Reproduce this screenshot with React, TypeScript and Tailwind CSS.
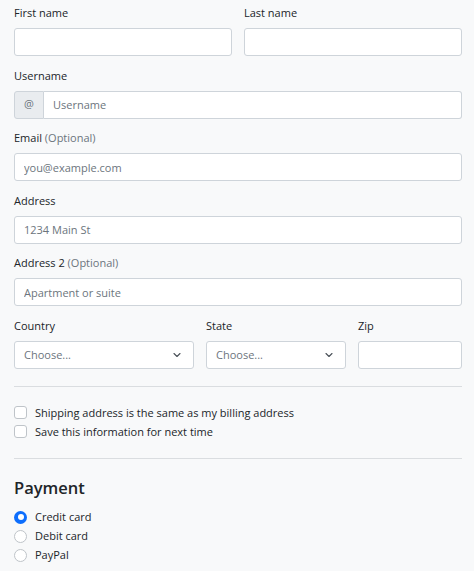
import { ChevronDown } from "lucide-react";

function Label({ text, optional }: { text: string; optional?: boolean }) {
  return (
    <label className="mb-[6px] block leading-[18px]">
      {text}
      {optional && <span className="text-[#6c757d]"> (Optional)</span>}
    </label>
  );
}

function TextInput({ placeholder = "" }: { placeholder?: string }) {
  return (
    <input
      placeholder={placeholder}
      className="block h-[28px] w-full rounded-[3px] border border-[#ced4da] bg-white px-[9px] text-[11px] text-[#212529] outline-none placeholder:text-[#6c757d]"
    />
  );
}

function Select() {
  return (
    <div className="flex h-[28px] w-full items-center justify-between rounded-[3px] border border-[#ced4da] bg-white pr-[10px] pl-[9px] text-[#6c757d]">
      <span>Choose...</span>
      <ChevronDown size={12} strokeWidth={2.2} className="text-[#495057]" />
    </div>
  );
}

function Check({ text }: { text: string }) {
  return (
    <div className="flex h-[19px] items-center gap-[8px]">
      <span className="h-[13px] w-[13px] rounded-[3px] border border-[#bfc4c9] bg-white" />
      <span>{text}</span>
    </div>
  );
}

function Radio({ text, checked }: { text: string; checked?: boolean }) {
  return (
    <div className="flex h-[19px] items-center gap-[8px]">
      {checked ? (
        <span className="flex h-[13px] w-[13px] items-center justify-center rounded-full bg-[#0d6efd]">
          <span className="h-[6px] w-[6px] rounded-full bg-white" />
        </span>
      ) : (
        <span className="h-[13px] w-[13px] rounded-full border border-[#bfc4c9] bg-white" />
      )}
      <span>{text}</span>
    </div>
  );
}

export default function App() {
  return (
    <div className="min-h-screen bg-[#f8f9fa] px-[14px] pt-[4px] font-['Open_Sans',sans-serif] text-[11px] text-[#212529]">
      <form className="w-[448px]">
        <div className="mb-[10.6px] grid grid-cols-2 gap-x-[12px]">
          <div>
            <Label text="First name" />
            <TextInput />
          </div>
          <div>
            <Label text="Last name" />
            <TextInput />
          </div>
        </div>

        <div className="mb-[10.6px]">
          <Label text="Username" />
          <div className="flex h-[28px]">
            <span className="flex w-[30px] items-center justify-center rounded-l-[3px] border border-[#ced4da] bg-[#e9ecef] text-[#6c757d]">
              @
            </span>
            <input
              placeholder="Username"
              className="block h-full min-w-0 flex-1 rounded-r-[3px] border border-l-0 border-[#ced4da] bg-white px-[9px] text-[11px] outline-none placeholder:text-[#6c757d]"
            />
          </div>
        </div>

        <div className="mb-[10.6px]">
          <Label text="Email" optional />
          <TextInput placeholder="you@example.com" />
        </div>

        <div className="mb-[10.6px]">
          <Label text="Address" />
          <TextInput placeholder="1234 Main St" />
        </div>

        <div className="mb-[10.6px]">
          <Label text="Address 2" optional />
          <TextInput placeholder="Apartment or suite" />
        </div>

        <div className="grid grid-cols-[180px_140px_104px] gap-x-[12px]">
          <div>
            <Label text="Country" />
            <Select />
          </div>
          <div>
            <Label text="State" />
            <Select />
          </div>
          <div>
            <Label text="Zip" />
            <TextInput />
          </div>
        </div>

        <hr className="mt-[17.5px] border-t border-[#dadde0]" />

        <div className="mt-[16px]">
          <Check text="Shipping address is the same as my billing address" />
          <Check text="Save this information for next time" />
        </div>

        <hr className="mt-[17px] border-t border-[#dadde0]" />

        <h4 className="mt-[17px] text-[16.5px] leading-[24px] font-semibold">Payment</h4>

        <div className="mt-[7.5px]">
          <Radio text="Credit card" checked />
          <Radio text="Debit card" />
          <Radio text="PayPal" />
        </div>
      </form>
    </div>
  );
}
